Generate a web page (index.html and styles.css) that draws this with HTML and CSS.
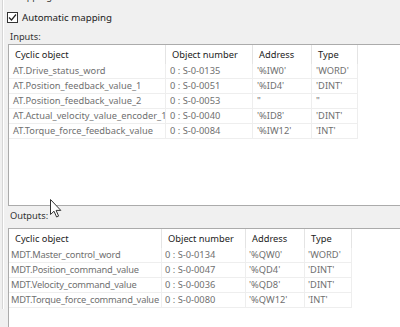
FILE: index.html
```html
<!DOCTYPE html>
<html lang="en">
<head>
    <meta charset="UTF-8">
    <title>Mapping</title>
    <link rel="stylesheet" href="styles.css">
</head>
<body>
    <div class="group">
        <div class="legend">Mapping</div>
        <label class="check">
            <span class="box">
                <svg width="9" height="9" viewBox="0 0 9 9"><path d="M1 4.5 L3.5 7 L8 1.5" fill="none" stroke="#222" stroke-width="1.2"/></svg>
            </span>
            Automatic mapping
        </label>

        <div class="caption">Inputs:</div>
        <div class="list list-in">
            <div class="row head">
                <div class="cell">Cyclic object</div>
                <div class="cell">Object number</div>
                <div class="cell">Address</div>
                <div class="cell">Type</div>
            </div>
            <div class="row">
                <div class="cell">AT.Drive_status_word</div>
                <div class="cell">0 : S-0-0135</div>
                <div class="cell">'%IW0'</div>
                <div class="cell">'WORD'</div>
            </div>
            <div class="row">
                <div class="cell">AT.Position_feedback_value_1</div>
                <div class="cell">0 : S-0-0051</div>
                <div class="cell">'%ID4'</div>
                <div class="cell">'DINT'</div>
            </div>
            <div class="row">
                <div class="cell">AT.Position_feedback_value_2</div>
                <div class="cell">0 : S-0-0053</div>
                <div class="cell">"</div>
                <div class="cell">"</div>
            </div>
            <div class="row">
                <div class="cell">AT.Actual_velocity_value_encoder_1</div>
                <div class="cell">0 : S-0-0040</div>
                <div class="cell">'%ID8'</div>
                <div class="cell">'DINT'</div>
            </div>
            <div class="row">
                <div class="cell">AT.Torque_force_feedback_value</div>
                <div class="cell">0 : S-0-0084</div>
                <div class="cell">'%IW12'</div>
                <div class="cell">'INT'</div>
            </div>
        </div>

        <div class="caption caption-out">Outputs:</div>
        <div class="list list-out">
            <div class="row head">
                <div class="cell">Cyclic object</div>
                <div class="cell">Object number</div>
                <div class="cell">Address</div>
                <div class="cell">Type</div>
            </div>
            <div class="row">
                <div class="cell">MDT.Master_control_word</div>
                <div class="cell">0 : S-0-0134</div>
                <div class="cell">'%QW0'</div>
                <div class="cell">'WORD'</div>
            </div>
            <div class="row">
                <div class="cell">MDT.Position_command_value</div>
                <div class="cell">0 : S-0-0047</div>
                <div class="cell">'%QD4'</div>
                <div class="cell">'DINT'</div>
            </div>
            <div class="row">
                <div class="cell">MDT.Velocity_command_value</div>
                <div class="cell">0 : S-0-0036</div>
                <div class="cell">'%QD8'</div>
                <div class="cell">'DINT'</div>
            </div>
            <div class="row">
                <div class="cell">MDT.Torque_force_command_value</div>
                <div class="cell">0 : S-0-0080</div>
                <div class="cell">'%QW12'</div>
                <div class="cell">'INT'</div>
            </div>
        </div>
    </div>

    <svg class="cursor" width="12" height="19" viewBox="0 0 12 19">
        <path d="M0.5 0.5 L0.5 15.5 L4 12.2 L6.6 18 L8.6 17.1 L6.1 11.4 L10.8 11.4 Z" fill="#fff" stroke="#333" stroke-width="1"/>
    </svg>
</body>
</html>
```

FILE: styles.css
```css
body {
    margin: 0;
    background-color: #f0f0f0;
    font-family: "Noto Sans", "Open Sans", sans-serif;
    font-size: 9.3px;
    color: #222;
    overflow: hidden;
    height: 327px;
    position: relative;
}
.group {
    margin-left: 2px;
    border-left: 1px solid #d6d6d6;
    box-shadow: inset 1px 0 0 #fff;
    height: 318px;
    padding-left: 5px;
}
.legend {
    margin-top: -9px;
    margin-left: 5px;
    line-height: 12px;
    color: #333;
}
.check {
    display: flex;
    align-items: center;
    height: 14px;
    margin-top: 7px;
    margin-left: -1px;
    font-size: 9.7px;
}
.box {
    width: 9px;
    height: 9px;
    border: 1px solid #333;
    background-color: #fff;
    margin-right: 4px;
    display: flex;
}
.caption {
    margin-top: 6px;
    padding-left: 2px;
    line-height: 14px;
    color: #333;
}
.caption-out {
    margin-top: 3px;
    margin-bottom: 5px;
}
.list {
    background-color: #fff;
    border: 1px solid #ababab;
    border-right: none;
    margin-right: -10px;
    box-sizing: border-box;
}
.list-in {
    height: 162px;
}
.list-out {
    height: 99px;
    border-bottom: none;
}
.row {
    display: grid;
    justify-content: start;
}
.list-in .row {
    grid-template-columns: 157px 87px 59px 46px;
}
.list-out .row {
    grid-template-columns: 153px 84px 59px 47px;
}
.cell {
    box-sizing: border-box;
    height: 15px;
    line-height: 14px;
    padding-left: 4px;
    border-right: 1px solid #eeeeee;
    border-bottom: 1px solid #eeeeee;
    color: #707070;
    white-space: nowrap;
    overflow: hidden;
}
.list-out .cell {
    padding-left: 3px;
}
.list-out .cell:first-child {
    padding-left: 2px;
    letter-spacing: -0.2px;
}
.head .cell,
.list-out .head .cell {
    height: 19px;
    line-height: 19px;
    padding-left: 6px;
    letter-spacing: 0;
    border-bottom: none;
    border-right-color: #e4e4e4;
    color: #222;
}
.cursor {
    position: absolute;
    left: 50px;
    top: 199px;
}
```
